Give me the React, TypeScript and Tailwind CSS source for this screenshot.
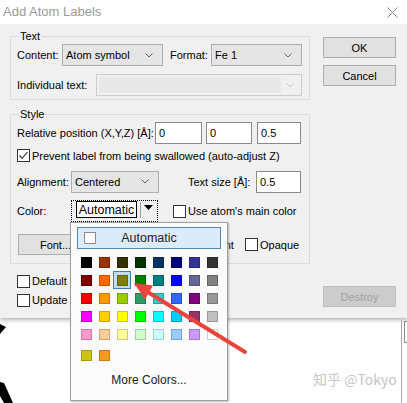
import React from 'react';

const Chevron = ({ color = '#606060' }: { color?: string }) => (
  <svg width="8" height="5" viewBox="0 0 8 5" className="shrink-0">
    <path d="M0.5 0.5 L4 4 L7.5 0.5" fill="none" stroke={color} strokeWidth="1" />
  </svg>
);

const Check = ({ checked = false }: { checked?: boolean }) => (
  <div className="w-[13px] h-[13px] shrink-0 border border-[#333333] bg-white flex items-center justify-center">
    {checked && (
      <svg width="11" height="11" viewBox="0 0 11 11">
        <path d="M1.5 5.5 L4.2 8.3 L9.5 2" fill="none" stroke="#222222" strokeWidth="1.1" />
      </svg>
    )}
  </div>
);

const Combo = ({ text, className }: { text: string; className: string }) => (
  <div
    className={`h-[22px] border border-[#adadad] bg-[#e5e5e5] flex items-center justify-between pl-[3px] pr-[9px] ${className}`}
  >
    <span>{text}</span>
    <Chevron />
  </div>
);

const Edit = ({ text, className }: { text: string; className: string }) => (
  <div className={`h-[22px] border border-[#8a8a8a] bg-white flex items-center pl-[3px] ${className}`}>
    {text}
  </div>
);

const Btn = ({ text, className }: { text: string; className: string }) => (
  <div className={`h-[21px] border border-[#adadad] bg-[#e1e1e1] flex items-center justify-center ${className}`}>
    {text}
  </div>
);

const rows: string[][] = [
  ['bg-[#000000]', 'bg-[#993300]', 'bg-[#333300]', 'bg-[#003300]', 'bg-[#003366]', 'bg-[#000080]', 'bg-[#333399]', 'bg-[#333333]'],
  ['bg-[#800000]', 'bg-[#ff6600]', 'bg-[#808000]', 'bg-[#008000]', 'bg-[#008080]', 'bg-[#0000ff]', 'bg-[#666699]', 'bg-[#808080]'],
  ['bg-[#ff0000]', 'bg-[#ff9900]', 'bg-[#99cc00]', 'bg-[#339966]', 'bg-[#33cccc]', 'bg-[#3366ff]', 'bg-[#800080]', 'bg-[#999999]'],
  ['bg-[#ff00ff]', 'bg-[#ffcc00]', 'bg-[#ffff00]', 'bg-[#00ff00]', 'bg-[#00ffff]', 'bg-[#00ccff]', 'bg-[#993366]', 'bg-[#c0c0c0]'],
  ['bg-[#ff99cc]', 'bg-[#ffcc99]', 'bg-[#ffff99]', 'bg-[#ccffcc]', 'bg-[#ccffff]', 'bg-[#99ccff]', 'bg-[#cc99ff]', 'bg-[#ffffff]'],
];

const Swatch = ({ cls, selected = false }: { cls: string; selected?: boolean }) => (
  <div
    className={
      selected
        ? 'w-[18px] h-[18px] border border-[#3c7fb1] bg-[#c4dcf3] pt-[3px] pl-[3px]'
        : 'w-[18px] h-[18px] pt-[4px] pl-[4px]'
    }
  >
    <div className={`w-[11px] h-[11px] border border-black/20 ${cls}`} />
  </div>
);

export default function App() {
  return (
    <div className="relative w-[407px] h-[403px] bg-white overflow-hidden font-['Liberation_Sans',Arial,sans-serif] text-[11px] text-[#000000] leading-[14px]">
      {/* Dialog */}
      <div className="h-[318px] bg-[#f0f0f0] flex flex-col shadow-[0_2px_4px_rgba(0,0,0,0.3)]">
        {/* Title bar */}
        <div className="h-[24px] shrink-0 bg-white flex items-center justify-between pl-[3px] pr-[9px]">
          <span className="text-[13px] text-[#9a9a9a]">Add Atom Labels</span>
          <svg width="11" height="11" viewBox="0 0 11 11">
            <path d="M0.5 0.5 L10.5 10.5 M10.5 0.5 L0.5 10.5" stroke="#8a8a8a" strokeWidth="1" />
          </svg>
        </div>

        {/* Body */}
        <div className="flex flex-1">
          {/* Left column */}
          <div className="ml-[10px] w-[300px] flex flex-col">
            {/* Text group */}
            <div className="relative mt-[12px] w-[300px] h-[64px] border border-[#dcdcdc] pl-[6px] pt-[7px]">
              <span className="absolute left-[8px] top-[-8px] bg-[#f0f0f0] px-[1px]">Text</span>
              <div className="flex items-center h-[22px]">
                <span className="w-[45px]">Content:</span>
                <Combo text="Atom symbol" className="w-[101px]" />
                <span className="ml-[7px] w-[41px]">Format:</span>
                <Combo text="Fe 1" className="w-[91px]" />
              </div>
              <div className="flex items-center h-[22px] mt-[8px]">
                <span className="w-[79px]">Individual text:</span>
                <div className="w-[206px] h-[22px] border border-[#cccccc] bg-[#f0f0f0] p-[2px] flex">
                  <div className="flex-1 bg-[#e8e8e8]" />
                  <div className="w-[18px] flex items-center justify-center">
                    <Chevron color="#c0c0c0" />
                  </div>
                </div>
              </div>
            </div>

            {/* Style group */}
            <div className="relative mt-[14px] w-[300px] h-[150px] border border-[#dcdcdc] pl-[6px] pt-[7px]">
              <span className="absolute left-[8px] top-[-8px] bg-[#f0f0f0] px-[1px]">Style</span>
              <div className="flex items-center h-[22px]">
                <span className="w-[138px]">Relative position (X,Y,Z) [Å]:</span>
                <Edit text="0" className="w-[47px]" />
                <Edit text="0" className="ml-[4px] w-[46px]" />
                <Edit text="0.5" className="ml-[5px] w-[44px]" />
              </div>
              <div className="flex items-center h-[13px] mt-[5px]">
                <Check checked />
                <span className="ml-[2px]">Prevent label from being swallowed (auto-adjust Z)</span>
              </div>
              <div className="flex items-center h-[21px] mt-[9px]">
                <span className="w-[54px]">Alignment:</span>
                <Combo text="Centered" className="w-[88px] h-[21px]" />
                <span className="ml-[29px] w-[68px]">Text size [Å]:</span>
                <Edit text="0.5" className="w-[45px] h-[21px]" />
              </div>
              <div className="flex items-center h-[22px] mt-[8px]">
                <span className="w-[54px]">Color:</span>
                <div className="w-[87px] h-[22px] border border-dotted border-black flex items-start pl-[4px]">
                  <div className="h-[17px] w-[61px] border border-black bg-white flex items-center justify-center text-[12.5px]">
                    Automatic
                  </div>
                  <div className="ml-[3px] mt-[1px] w-[1px] h-[16px] bg-[#a0a0a0]" />
                  <svg width="9" height="6" viewBox="0 0 9 6" className="ml-[3px] mt-[4px]">
                    <path d="M0 0 L9 0 L4.5 5 Z" fill="#000000" />
                  </svg>
                </div>
                <div className="ml-[15px]">
                  <Check />
                </div>
                <span className="ml-[2px]">Use atom's main color</span>
              </div>
              <div className="flex items-center h-[21px] mt-[12px]">
                <Btn text="Font..." className="ml-[1px] w-[75px]" />
                <div className="ml-[67px]">
                  <Check />
                </div>
                <span className="ml-[2px] w-[70px]">Transparent</span>
                <Check />
                <span className="ml-[2px]">Opaque</span>
              </div>
            </div>

            <div className="flex items-center h-[14px] mt-[10px] pl-[7px]">
              <Check />
              <span className="ml-[2px]">Default</span>
            </div>
            <div className="flex items-center h-[14px] mt-[5px] pl-[7px]">
              <Check />
              <span className="ml-[2px]">Update</span>
            </div>
          </div>

          {/* Right column */}
          <div className="ml-[13px] w-[73px] flex flex-col pb-[11px]">
            <Btn text="OK" className="mt-[13px]" />
            <Btn text="Cancel" className="mt-[7px]" />
            <div className="mt-auto h-[21px] border border-[#bfbfbf] bg-[#cccccc] flex items-center justify-center text-[#a0a0a0]">
              Destroy
            </div>
          </div>
        </div>
      </div>

      {/* Color popup */}
      <div className="absolute left-[70px] top-[222px] w-[158px] h-[179px] bg-[#fbfbfb] border border-[#9c9c9c] shadow-[1px_1px_2px_rgba(0,0,0,0.25)] pl-[6px] pt-[4px] flex flex-col">
        <div className="w-[144px] h-[22px] border border-[#4f87b8] bg-[#dcebf9] flex items-center">
          <div className="ml-[6px] w-[12px] h-[12px] border border-[#8a8a8a] bg-white shrink-0" />
          <span className="flex-1 text-center text-[12.5px] text-[#222222]">Automatic</span>
          <div className="w-[18px] shrink-0" />
        </div>
        <div className="mt-[4px] w-[144px] grid grid-cols-8">
          {rows.map((r, i) =>
            r.map((c, j) => <Swatch key={`${i}-${j}`} cls={c} selected={i === 1 && j === 2} />)
          )}
        </div>
        <div className="mt-[3px] flex">
          <Swatch cls="bg-[#cbc31a]" />
          <Swatch cls="bg-[#f49b1e]" />
        </div>
        <div className="mt-[9px] w-[144px] text-center text-[12px] text-[#222222]">More Colors...</div>
      </div>

      {/* Watermark */}
      <div className="absolute left-[313px] top-[372px] text-[14px] text-[#c6c6c6] font-['Noto_Sans_CJK_SC',sans-serif]">
        知乎 @Tokyo
      </div>

      {/* Drawing overlay: arrow and background strokes */}
      <svg className="absolute left-0 top-0 pointer-events-none" width="407" height="403" viewBox="0 0 407 403">
        <polygon points="0,324 6,327 0,334" fill="#000000" />
        <polygon points="0,382 4,383 13,403 4,403 0,396" fill="#000000" />
        <line x1="401.5" y1="320" x2="401.5" y2="403" stroke="#a8a8a8" strokeWidth="1" />
        <rect x="404.5" y="321.5" width="6" height="21" fill="none" stroke="#8c8c8c" strokeWidth="1" />
        <line x1="146" y1="291" x2="245" y2="352" stroke="#e8453c" strokeWidth="4" strokeLinecap="round" />
        <polygon points="134,283 153,285.5 145,299.5" fill="#e8453c" />
      </svg>
    </div>
  );
}
